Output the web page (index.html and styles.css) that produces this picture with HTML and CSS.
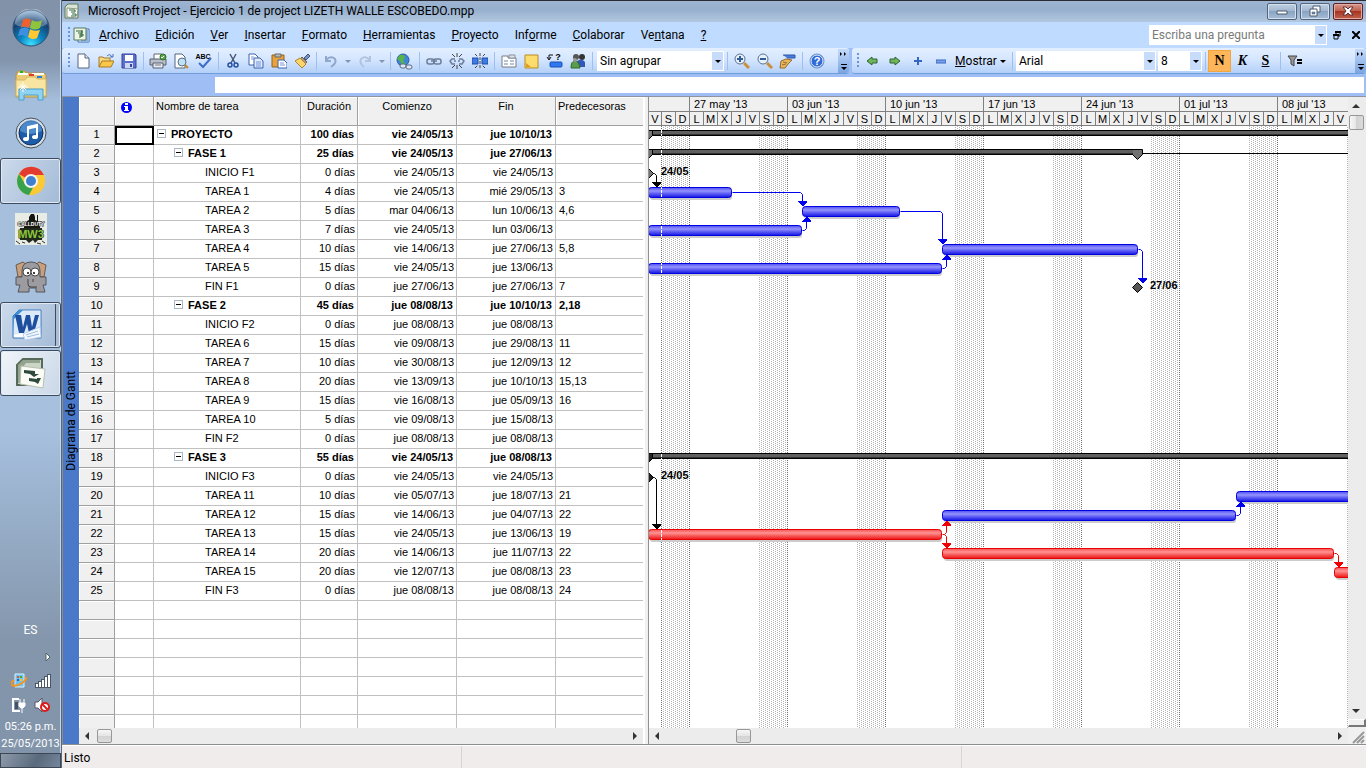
FILE: index.html
```html
<!DOCTYPE html>
<html lang="es">
<head>
<meta charset="utf-8">
<title>Microsoft Project - Ejercicio 1 de project LIZETH WALLE ESCOBEDO.mpp</title>
<link rel="stylesheet" href="styles.css">
</head>
<body>
<div class="screen">
<nav class="taskbar" aria-label="Barra de tareas">
  <button class="start" aria-label="Inicio"><svg width="38" height="38" viewBox="0 0 38 38">
    <defs>
      <radialGradient id="orb" cx=".5" cy=".95" r=".9"><stop offset="0" stop-color="#3fe0ff"/><stop offset=".35" stop-color="#0b86c4"/><stop offset=".75" stop-color="#15406f"/><stop offset="1" stop-color="#7fa6cc"/></radialGradient>
    </defs>
    <circle cx="19" cy="19" r="18" fill="url(#orb)" stroke="#31506e"/>
    <path d="M3 15a16 16 0 0 1 32 0c-6 5-26 5-32 0z" fill="#fff" opacity=".28"/>
    <path d="M11 11c3-2 5-2 8 0l-2 8c-3-2-6-2-8 0z" fill="#f0602a"/>
    <path d="M20 11c3 2 6 2 10 0l-2 8c-4 2-7 2-10 0z" fill="#8fc43c"/>
    <path d="M8 20c3-2 6-2 9 0l-2 8c-3-2-6-2-9-1z" fill="#3f8fe0"/>
    <path d="M18 20c3 2 6 2 10 1l-3 8c-3 2-6 1-9-1z" fill="#fdc832"/>
  </svg></button>
  <button class="task" aria-label="Explorador"><svg width="34" height="32" viewBox="0 0 34 32">
    <path d="M3 4l1-2h7l1 2h18l2 2v22H2V6z" fill="#e9cc75" stroke="#b59545"/>
    <path d="M4 5h10M18 5h12" stroke="#fff" stroke-width="2"/><path d="M6 3h3" stroke="#19b530" stroke-width="2"/><path d="M15 6h5" stroke="#e03b2e" stroke-width="2"/><path d="M23 8h5" stroke="#2b7fd8" stroke-width="2"/>
    <path d="M2 11h9l2-3h8l2 2h9v17H2z" fill="#f8e5a2" stroke="#d7b765"/>
    <path d="M5 20h24v11h-5v-5H10v5H5z" fill="#8fd3f2" stroke="#4c9dc9"/><path d="M9 13v10M4 18h10M6 15l6 6M12 15l-6 6" stroke="#fff"/>
  </svg></button>
  <button class="task" aria-label="iTunes"><svg width="32" height="32" viewBox="0 0 32 32">
    <circle cx="16" cy="16" r="15" fill="#d9dfe6" stroke="#44505f"/><circle cx="16" cy="16" r="12" fill="#1c5ca8" stroke="#0e2d57"/><path d="M5 14a11 11 0 0 1 22 0q-11 6-22 0z" fill="#69a9e2" opacity=".6"/>
    <path d="M13 22V10l9-2v12" fill="none" stroke="#fff" stroke-width="2"/><path d="M13 11l9-2" stroke="#fff" stroke-width="3"/><ellipse cx="11" cy="22" rx="3" ry="2" fill="#fff"/><ellipse cx="20" cy="20" rx="3" ry="2" fill="#fff"/>
  </svg></button>
  <button class="task task-open" aria-label="Chrome"><svg width="30" height="30" viewBox="0 0 30 30">
    <circle cx="15" cy="15" r="14" fill="#fcc934"/>
    <path d="M15 15L3 8A14 14 0 0 1 28 9H15z" fill="#e33b2e"/><path d="M15 15L9 18 3 8a14 14 0 0 0 10 21l6-11z" fill="#37a24c"/>
    <circle cx="15" cy="15" r="7" fill="#f4f4f4"/><circle cx="15" cy="15" r="5" fill="#3f7fd0"/>
  </svg></button>
  <button class="task" aria-label="Call of Duty MW3"><svg width="32" height="32" viewBox="0 0 32 32">
    <path d="M0 0h32v32H0z" fill="#e9ece4"/><path d="M9 14l3-6 2-1V4l2-3h3l1 3v3l2 1V2h1v6l2 6v3H9z" fill="#14170f"/><path d="M5 15h22v12h-4l-3 3-2-3-4 3-3-3H5z" fill="#23281d"/><path d="M1 28l4 3M27 28l3 2M7 29l3 1M22 30l4 1" stroke="#30352a"/>
    <text x="16" y="13" class="logo-small">CALLDUTY</text><text x="16" y="25" class="logo-big">MW3</text>
  </svg></button>
  <button class="task" aria-label="Elefante"><svg width="32" height="32" viewBox="0 0 32 32">
    <path d="M1 4l7-3 4 3v11l-9 1zM31 4l-7-3-4 3v11l9 1z" fill="#c9a07e" stroke="#6d5a4b"/>
    <path d="M7 10q0-9 9-9t9 9v6h6v8h-3l2 7h-9v-4h-7v4H3l2-7H1v-8h6z" fill="#9c9ca0" stroke="#55555a"/>
    <circle cx="12" cy="11" r="4" fill="#fff" stroke="#444"/><circle cx="20" cy="11" r="4" fill="#fff" stroke="#444"/><circle cx="13" cy="12" r="1"/><circle cx="19" cy="12" r="1"/>
    <path d="M13 18v5q0 3 3 3h6M18 18v3" fill="none" stroke="#444"/>
  </svg></button>
  <button class="task task-open task-stack" aria-label="Word"><svg width="32" height="32" viewBox="0 0 32 32">
    <path d="M8 1h22v28H2V7z" fill="#fff" stroke="#3a78bf"/><path d="M9 2h20v18L3 26V8z" fill="#dbe9f8"/><path d="M2 29V7l6-6h4L3 10z" fill="#3d8fd6"/>
    <path d="M4 6h6l2 12 3-12h4l2 12 3-12h4l-5 18h-5l-2-9-3 9H8z" fill="#1e4f9f"/>
    <path d="M12 25l17-7 1 10-16 3z" fill="#f4f9ff" stroke="#b9cfe8"/><path d="M15 26l12-4M16 28l12-3" stroke="#9cbbe0"/>
  </svg></button>
  <button class="task task-active" aria-label="Project"><svg width="34" height="34" viewBox="0 0 34 34">
    <path d="M9 3h19v26H3V9z" fill="#cdd5c6" stroke="#57695a" stroke-width="2"/><path d="M4 9l5-5h17v3H12L8 12v15H4z" fill="#93a48e"/>
    <path d="M7 10l24 3-2 19-23-4z" fill="#fafcf5" stroke="#b8c0b0"/>
    <path d="M10 14l11 1v3h4l-5 3-4-3-6-1zM15 22l8 1v-1h4l-3 6-3-2-6-1z" fill="#2d4a3a"/>
  </svg></button>
  <div class="tray">
    <div class="tray-lang">ES</div>
    <button class="tray-more" aria-label="Mostrar iconos ocultos"><svg width="6" height="10" viewBox="0 0 6 10"><path d="M1 1l4 4-4 4z" fill="#fff" stroke="#566"/></svg></button>
    <div class="tray-icons">
      <svg width="16" height="16" viewBox="0 0 16 16"><path d="M4 1h9v13H4z" fill="#6fc3ef" stroke="#d9f2ff"/><path d="M6 3h2v2H6z" fill="#e8502c"/><path d="M9 3h2v2H9z" fill="#54a52e"/><path d="M6 6h2v2H6z" fill="#2463c4"/><path d="M9 6h2v2H9z" fill="#f6c92a"/><path d="M14 4q3 2-3 6t-10 2q-2-2 2-5" fill="none" stroke="#f7941d" stroke-width="2"/></svg>
      <svg width="16" height="14" viewBox="0 0 16 14"><path d="M0 9h4v5H0zM3 7h4v7H3zM6 5h4v9H6zM9 2h4v12H9zM12 0h4v14h-4z" fill="#4a5768"/><path d="M1 10h2v3H1zM4 8h2v5H4zM7 6h2v7H7zM10 3h2v10h-2zM13 1h2v12h-2z" fill="#fff"/></svg>
      <svg width="16" height="16" viewBox="0 0 16 16"><path d="M8 2H2v12h7" fill="none" stroke="#fff" stroke-width="2"/><path d="M9 2v4M13 2v4M8 6h6v3l-2 2h-2L8 9zM11 11v5" fill="#fff" stroke="#fff"/><path d="M4 5h3v7H4z" fill="#445364"/></svg>
      <svg width="17" height="16" viewBox="0 0 17 16"><path d="M1 5h3l4-4v14l-4-4H1z" fill="#fff" stroke="#556"/><circle cx="11" cy="10" r="4" fill="#fff" stroke="#d81b1b" stroke-width="2"/><path d="M8 7l6 6" stroke="#d81b1b" stroke-width="2"/></svg>
    </div>
    <div class="clock">05:26 p.m.</div>
    <div class="clock">25/05/2013</div>
  </div>
  <button class="show-desktop" aria-label="Mostrar escritorio"></button>
</nav>

<main class="window">
  <header class="titlebar">
    <svg width="16" height="16" viewBox="0 0 16 16"><path d="M4 1h10v14H1V4z" fill="#dbe5d4" stroke="#5f7a62"/><path d="M3 5l11 1-1 9-10-1z" fill="#fff" stroke="#8b9a85"/><path d="M5 7h6v2H7M8 11h4v2H7" fill="none" stroke="#2f6b3d"/></svg>
    <h1>Microsoft Project - Ejercicio 1 de project LIZETH WALLE ESCOBEDO.mpp</h1>
    <div class="window-controls">
      <button aria-label="Minimizar"><svg width="12" height="12" viewBox="0 0 12 12"><path d="M1 6h10v3H1z" fill="#fff" stroke="#4b5b70"/></svg></button>
      <button aria-label="Restaurar"><svg width="12" height="12" viewBox="0 0 12 12"><path d="M4 1h7v6H4z" fill="#fff" stroke="#4b5b70"/><path d="M1 4h7v7H1z" fill="#fff" stroke="#4b5b70"/><path d="M3 7h3v2H3z" fill="#6f8fb3" stroke="#4b5b70" stroke-width=".5"/></svg></button>
      <button class="close" aria-label="Cerrar"><svg width="12" height="12" viewBox="0 0 12 12"><path d="M1 2h3l2 2 2-2h3L8 6l3 4H8L6 8l-2 2H1l3-4z" fill="#fff" stroke="#5b3237"/></svg></button>
    </div>
  </header>

  <div class="menubar">
    <span class="grip"></span>
    <svg class="menu-icon" width="18" height="17" viewBox="0 0 18 17"><path d="M5 2h11v13H5z" fill="#fff" stroke="#3f6fb5"/><path d="M14 3v11M8 14h8" stroke="#8fb2e0" stroke-width="2"/><path d="M1 1h12v12H1z" fill="#eef3e6" stroke="#557a5b"/><path d="M3 4h6v2H5M6 8h5M8 6v4h-2M9 3v7" fill="none" stroke="#2f6b3d"/></svg>
    <button><u>A</u>rchivo</button><button><u>E</u>dición</button><button><u>V</u>er</button><button><u>I</u>nsertar</button><button><u>F</u>ormato</button><button><u>H</u>erramientas</button><button><u>P</u>royecto</button><button>Inf<u>o</u>rme</button><button><u>C</u>olaborar</button><button>Ve<u>n</u>tana</button><button><u>?</u></button>
    <div class="menubar-end">
      <label class="combo combo-ask"><input type="text" placeholder="Escriba una pregunta" aria-label="Escriba una pregunta"><span class="drop"></span></label>
      <button class="doc-button" aria-label="Restaurar ventana"><svg width="8" height="9" viewBox="0 0 8 9"><path d="M3 3V1h4v4H5M1 4h4v4H1z" fill="none" stroke="#000"/><path d="M2 0h6v2H2zM0 3h6v2H0z"/></svg></button>
      <button class="doc-button" aria-label="Cerrar documento"><svg width="8" height="8" viewBox="0 0 8 8"><path d="M0 0l8 8M8 0L0 8" stroke="#000" stroke-width="2"/></svg></button>
    </div>
  </div>

  <div class="toolbars">
    <div class="toolbar">
      <span class="grip"></span>
      <button aria-label="Nuevo"><svg width="16" height="16" viewBox="0 0 16 16"><path d="M3 1h7l4 4v10H3z" fill="#fff" stroke="#56657f"/><path d="M10 1v4h4" fill="#dbe6f5" stroke="#56657f"/></svg></button>
      <button aria-label="Abrir"><svg width="16" height="16" viewBox="0 0 16 16"><path d="M1 14V4h4l1 1h6v3" fill="#f6d983" stroke="#a87b22"/><path d="M1 14l3-6h12l-3 6z" fill="#fcc64b" stroke="#a87b22"/><path d="M9 3q3-3 5 1M12 4h3V1" fill="none" stroke="#4573b5"/></svg></button>
      <button aria-label="Guardar"><svg width="16" height="16" viewBox="0 0 16 16"><path d="M1 1h13l1 1v13H1z" fill="#5c6fce" stroke="#34459c"/><path d="M4 2h8v6H4z" fill="#fff"/><path d="M4 10h8v5H4z" fill="#cfd6ef"/><path d="M9 11h2v3H9z" fill="#34459c"/></svg></button>
      <i class="sep"></i>
      <button aria-label="Imprimir"><svg width="18" height="16" viewBox="0 0 18 16"><path d="M5 1h8v6H5z" fill="#fff" stroke="#666"/><path d="M1 6h16v6H1z" fill="#b9bec8" stroke="#555f70"/><path d="M4 10h10v5H4z" fill="#e9edf4" stroke="#555f70"/><path d="M6 12h6" stroke="#777"/><circle cx="14" cy="4" r="3" fill="#58a84a" stroke="#2e6e2a"/><path d="M12 4l1 1 2-2" stroke="#fff" fill="none"/></svg></button>
      <button aria-label="Vista preliminar"><svg width="16" height="16" viewBox="0 0 16 16"><path d="M2 1h7l3 3v11H2z" fill="#fff" stroke="#56657f"/><circle cx="9" cy="9" r="4" fill="#bfe0f5" stroke="#57708c"/><path d="M12 12l3 3" stroke="#c8862c" stroke-width="2"/></svg></button>
      <button aria-label="Ortografía"><svg width="18" height="18" viewBox="0 0 18 18"><text x="8" y="7" class="abc">ABC</text><path d="M4 11l4 4 8-9" fill="none" stroke="#3b6fc9" stroke-width="2"/></svg></button>
      <i class="sep"></i>
      <button aria-label="Cortar"><svg width="16" height="16" viewBox="0 0 16 16"><path d="M5 1l5 9M11 1L6 10" stroke="#47597a" stroke-width="1.5"/><circle cx="5" cy="12" r="2" fill="none" stroke="#2450a4" stroke-width="1.5"/><circle cx="11" cy="12" r="2" fill="none" stroke="#2450a4" stroke-width="1.5"/></svg></button>
      <button aria-label="Copiar"><svg width="16" height="16" viewBox="0 0 16 16"><path d="M1 1h6l3 3v8H1z" fill="#fff" stroke="#3c62ad"/><path d="M6 5h6l3 3v7H6z" fill="#dfeaff" stroke="#3c62ad"/><path d="M3 4h3M3 6h3M8 9h5M8 11h5M8 13h5" stroke="#7596d8"/></svg></button>
      <button aria-label="Pegar"><svg width="16" height="16" viewBox="0 0 16 16"><path d="M1 2h12v12H1z" fill="#e9a33c" stroke="#94611c"/><path d="M4 1h6v3H4z" fill="#bbb" stroke="#666"/><path d="M7 7h6l3 3v5H7z" fill="#fff" stroke="#3c62ad"/><path d="M9 10h4M9 12h5" stroke="#7596d8"/></svg></button>
      <button aria-label="Copiar formato"><svg width="16" height="16" viewBox="0 0 16 16"><path d="M10 5l4-4 2 2-4 4z" fill="#7791c2" stroke="#41557d"/><path d="M8 4l5 5-2 2-5-5z" fill="#a89b88" stroke="#6e5f48"/><path d="M6 5l6 6-4 4L1 8z" fill="#fbd46c" stroke="#b0832c"/></svg></button>
      <i class="sep"></i>
      <button aria-label="Deshacer"><svg width="14" height="14" viewBox="0 0 14 14"><path d="M2 2v5h5M2 6q5-5 9-1 2 4-4 8" fill="none" stroke="#91a7cb" stroke-width="2"/></svg></button>
      <button class="mini" aria-label="Lista de deshacer"><span class="tri tri-dim"></span></button>
      <button aria-label="Rehacer"><svg width="14" height="14" viewBox="0 0 14 14"><path d="M12 2v5H7M12 6Q7 1 3 5q-2 4 3 8" fill="none" stroke="#b2c4de" stroke-width="2"/></svg></button>
      <button class="mini" aria-label="Lista de rehacer"><span class="tri tri-dim"></span></button>
      <i class="sep"></i>
      <button aria-label="Hipervínculo"><svg width="17" height="17" viewBox="0 0 17 17"><circle cx="7" cy="7" r="6" fill="#3f86d6" stroke="#2c5f9c"/><path d="M4 2q4-1 5 2L7 8l3 3-3 2-3-5-3-2z" fill="#59b447"/><g fill="#dfe8f5" stroke="#5c6c84"><rect x="4" y="11" width="6" height="4" rx="2"/><rect x="10" y="12" width="6" height="4" rx="2"/></g></svg></button>
      <i class="sep"></i>
      <button aria-label="Vincular tareas"><svg width="16" height="16" viewBox="0 0 16 16"><g fill="none" stroke="#6b7d99" stroke-width="1.5"><rect x="1" y="6" width="7" height="5" rx="2"/><rect x="8" y="6" width="7" height="5" rx="2"/><path d="M5 8h6"/></g></svg></button>
      <button aria-label="Desvincular tareas"><svg width="16" height="16" viewBox="0 0 16 16"><g fill="none" stroke="#6b7d99" stroke-width="1.5"><path d="M6 6H3L1 8l2 3h3M10 6h3l2 2-2 3h-3M5 8h2M9 8h2"/><path d="M8 0v4M3 1l3 3M13 1l-3 3M8 12v4M3 15l3-3M13 15l-3-3" stroke="#444" stroke-width="1"/></g></svg></button>
      <button aria-label="Dividir tarea"><svg width="16" height="16" viewBox="0 0 16 16"><path d="M0 5h6v6H0zM10 5h6v6h-6z" fill="#3f7be0" stroke="#1b4eae"/><path d="M8 0v16M3 1l3 3M13 1l-3 3M3 15l3-3M13 15l-3-3" stroke="#444" stroke-dasharray="3 1"/></svg></button>
      <i class="sep"></i>
      <button aria-label="Información de la tarea"><svg width="16" height="14" viewBox="0 0 16 14"><path d="M1 2h6v2h8v9H1z" fill="#fff" stroke="#767b85"/><path d="M8 1h6v3H8z" fill="#dfe4ee" stroke="#8a8f9c"/><path d="M3 7h4M9 7h4M3 10h4M9 10h4" stroke="#6f86ad"/></svg></button>
      <button aria-label="Notas"><svg width="15" height="15" viewBox="0 0 15 15"><path d="M1 1h13v13H1z" fill="#fbdc6c" stroke="#b98b20"/><path d="M2 9l5 4H2z" fill="#e49a22"/></svg></button>
      <button aria-label="Asignar recursos"><svg width="17" height="16" viewBox="0 0 17 16"><path d="M7 2H3v4M1 4l2 3 2-3" fill="none" stroke="#111"/><text x="12" y="7" class="qmark">?</text><rect x="4" y="9" width="12" height="5" rx="1" fill="#2f78ee" stroke="#1a4fb4"/></svg></button>
      <button aria-label="Recursos"><svg width="16" height="16" viewBox="0 0 16 16"><circle cx="6" cy="4" r="3" fill="#555"/><circle cx="12" cy="4" r="3" fill="#333"/><path d="M7 8q5-3 8 1v5H8z" fill="#3158b8"/><path d="M1 15q0-7 4-7t5 7z" fill="#5a9e4c" stroke="#2f6a2a"/><circle cx="5" cy="7" r="2" fill="#999"/></svg></button>
      <i class="sep"></i>
      <span class="combo combo-group"><select aria-label="Agrupar por"><option>Sin agrupar</option></select><span class="drop"></span></span>
      <i class="sep"></i>
      <button aria-label="Acercar"><svg width="16" height="16" viewBox="0 0 16 16"><circle cx="6" cy="6" r="5" fill="#e6f1fb" stroke="#5c7391"/><path d="M10 10l5 5" stroke="#c98f3d" stroke-width="3"/><path d="M3 6h6M6 3v6" stroke="#335b96" stroke-width="2"/></svg></button>
      <button aria-label="Alejar"><svg width="16" height="16" viewBox="0 0 16 16"><circle cx="6" cy="6" r="5" fill="#e6f1fb" stroke="#5c7391"/><path d="M10 10l5 5" stroke="#c98f3d" stroke-width="3"/><path d="M3 6h6" stroke="#335b96" stroke-width="2"/></svg></button>
      <button aria-label="Ir a la tarea"><svg width="17" height="16" viewBox="0 0 17 16"><path d="M4 2h12v3H8" fill="#4b7edb" stroke="#2c55a5"/><path d="M2 8l5-2 6 1-3 3-4 5H1z" fill="#e8b861" stroke="#97692a"/><path d="M4 9l4 1M3 12l4-1" stroke="#97692a"/></svg></button>
      <i class="sep"></i>
      <button aria-label="Ayuda"><svg width="16" height="16" viewBox="0 0 16 16"><circle cx="8" cy="8" r="7" fill="#2f6cd8" stroke="#6c8fc4"/><circle cx="8" cy="8" r="6" fill="none" stroke="#e8f0ff"/><text x="8" y="12" class="help">?</text></svg></button>
      <button class="overflow" aria-label="Opciones de barra de herramientas"><svg width="8" height="20" viewBox="0 0 8 20"><path d="M0 1l2 2-2 2zM4 1l2 2-2 2zM1 13h6v1H1zM1 16h6l-3 3z"/></svg></button>
    </div>
    <div class="toolbar toolbar-format">
      <span class="grip"></span>
      <button aria-label="Anular sangría"><svg width="12" height="10" viewBox="0 0 12 10"><path d="M1 5l5-4v2h5v4H6v2z" fill="#72b45b" stroke="#2c6431"/></svg></button>
      <button aria-label="Aplicar sangría"><svg width="12" height="10" viewBox="0 0 12 10"><path d="M11 5L6 1v2H1v4h5v2z" fill="#72b45b" stroke="#2c6431"/></svg></button>
      <button aria-label="Mostrar subtareas"><svg width="10" height="10" viewBox="0 0 10 10"><path d="M1 5h8M5 1v8" stroke="#3566c4" stroke-width="2"/></svg></button>
      <button aria-label="Ocultar subtareas"><svg width="10" height="10" viewBox="0 0 10 10"><path d="M0 4h10v3H0z" fill="#7ea2e6" stroke="#3566c4"/></svg></button>
      <button class="show-menu"><span><u>M</u>ostrar</span><span class="tri"></span></button>
      <i class="sep"></i>
      <span class="combo combo-font"><select aria-label="Fuente"><option>Arial</option></select><span class="drop"></span></span>
      <span class="combo combo-size"><select aria-label="Tamaño de fuente"><option>8</option></select><span class="drop"></span></span>
      <i class="sep"></i>
      <button class="letter letter-on" aria-pressed="true">N</button>
      <button class="letter"><em>K</em></button>
      <button class="letter"><u>S</u></button>
      <i class="sep"></i>
      <button aria-label="Autofiltro"><svg width="16" height="12" viewBox="0 0 16 12"><path d="M1 1h9L7 5v6L4 9V5z" fill="#999" stroke="#444"/><path d="M10 5h5M10 8h5" stroke="#000" stroke-width="2"/></svg></button>
      <button class="overflow" aria-label="Opciones de formato"><svg width="8" height="20" viewBox="0 0 8 20"><path d="M0 1l2 2-2 2zM4 1l2 2-2 2zM1 13h6v1H1zM1 16h6l-3 3z"/></svg></button>
    </div>
  </div>

  <div class="entry-bar"><input type="text" aria-label="Barra de entrada"></div>

  <div class="workspace">
    <div class="view-name"><span>Diagrama de Gantt</span></div>
    <section class="sheet-pane">
      <div class="sheet-clip">
      <table class="sheet">
        <colgroup><col class="c-num"><col class="c-info"><col class="c-name"><col class="c-dur"><col class="c-date"><col class="c-date"><col class="c-pred"></colgroup>
        <thead><tr><th></th><th class="info-head"><svg width="11" height="11" viewBox="0 0 11 11"><circle cx="5.5" cy="5.5" r="5.5" fill="#00f"/><path d="M4 4h3v4h1v1H3V8h1V5H3V4zM4 1h3v2H4z" fill="#fff"/></svg></th><th class="left">Nombre de tarea</th><th>Duración</th><th>Comienzo</th><th>Fin</th><th class="left">Predecesoras</th></tr></thead>
        <tbody>
        <tr class="sum"><th>1</th><td class="selected"></td><td class="l1"><button class="toggle" aria-label="Contraer"></button>PROYECTO</td><td>100 días</td><td>vie 24/05/13</td><td>jue 10/10/13</td><td></td></tr>
        <tr class="sum"><th>2</th><td></td><td class="l2"><button class="toggle" aria-label="Contraer"></button>FASE 1</td><td>25 días</td><td>vie 24/05/13</td><td>jue 27/06/13</td><td></td></tr>
        <tr><th>3</th><td></td><td>INICIO F1</td><td>0 días</td><td>vie 24/05/13</td><td>vie 24/05/13</td><td></td></tr>
        <tr><th>4</th><td></td><td>TAREA 1</td><td>4 días</td><td>vie 24/05/13</td><td>mié 29/05/13</td><td>3</td></tr>
        <tr><th>5</th><td></td><td>TAREA 2</td><td>5 días</td><td>mar 04/06/13</td><td>lun 10/06/13</td><td>4,6</td></tr>
        <tr><th>6</th><td></td><td>TAREA 3</td><td>7 días</td><td>vie 24/05/13</td><td>lun 03/06/13</td><td></td></tr>
        <tr><th>7</th><td></td><td>TAREA 4</td><td>10 días</td><td>vie 14/06/13</td><td>jue 27/06/13</td><td>5,8</td></tr>
        <tr><th>8</th><td></td><td>TAREA 5</td><td>15 días</td><td>vie 24/05/13</td><td>jue 13/06/13</td><td></td></tr>
        <tr><th>9</th><td></td><td>FIN F1</td><td>0 días</td><td>jue 27/06/13</td><td>jue 27/06/13</td><td>7</td></tr>
        <tr class="sum"><th>10</th><td></td><td class="l2"><button class="toggle" aria-label="Contraer"></button>FASE 2</td><td>45 días</td><td>jue 08/08/13</td><td>jue 10/10/13</td><td>2,18</td></tr>
        <tr><th>11</th><td></td><td>INICIO F2</td><td>0 días</td><td>jue 08/08/13</td><td>jue 08/08/13</td><td></td></tr>
        <tr><th>12</th><td></td><td>TAREA 6</td><td>15 días</td><td>vie 09/08/13</td><td>jue 29/08/13</td><td>11</td></tr>
        <tr><th>13</th><td></td><td>TAREA 7</td><td>10 días</td><td>vie 30/08/13</td><td>jue 12/09/13</td><td>12</td></tr>
        <tr><th>14</th><td></td><td>TAREA 8</td><td>20 días</td><td>vie 13/09/13</td><td>jue 10/10/13</td><td>15,13</td></tr>
        <tr><th>15</th><td></td><td>TAREA 9</td><td>15 días</td><td>vie 16/08/13</td><td>jue 05/09/13</td><td>16</td></tr>
        <tr><th>16</th><td></td><td>TAREA 10</td><td>5 días</td><td>vie 09/08/13</td><td>jue 15/08/13</td><td></td></tr>
        <tr><th>17</th><td></td><td>FIN F2</td><td>0 días</td><td>jue 08/08/13</td><td>jue 08/08/13</td><td></td></tr>
        <tr class="sum"><th>18</th><td></td><td class="l2"><button class="toggle" aria-label="Contraer"></button>FASE 3</td><td>55 días</td><td>vie 24/05/13</td><td>jue 08/08/13</td><td></td></tr>
        <tr><th>19</th><td></td><td>INICIO F3</td><td>0 días</td><td>vie 24/05/13</td><td>vie 24/05/13</td><td></td></tr>
        <tr><th>20</th><td></td><td>TAREA 11</td><td>10 días</td><td>vie 05/07/13</td><td>jue 18/07/13</td><td>21</td></tr>
        <tr><th>21</th><td></td><td>TAREA 12</td><td>15 días</td><td>vie 14/06/13</td><td>jue 04/07/13</td><td>22</td></tr>
        <tr><th>22</th><td></td><td>TAREA 13</td><td>15 días</td><td>vie 24/05/13</td><td>jue 13/06/13</td><td>19</td></tr>
        <tr><th>23</th><td></td><td>TAREA 14</td><td>20 días</td><td>vie 14/06/13</td><td>jue 11/07/13</td><td>22</td></tr>
        <tr><th>24</th><td></td><td>TAREA 15</td><td>20 días</td><td>vie 12/07/13</td><td>jue 08/08/13</td><td>23</td></tr>
        <tr><th>25</th><td></td><td>FIN F3</td><td>0 días</td><td>jue 08/08/13</td><td>jue 08/08/13</td><td>24</td></tr>
        <tr><th></th><td></td><td></td><td></td><td></td><td></td><td></td></tr>
        <tr><th></th><td></td><td></td><td></td><td></td><td></td><td></td></tr>
        <tr><th></th><td></td><td></td><td></td><td></td><td></td><td></td></tr>
        <tr><th></th><td></td><td></td><td></td><td></td><td></td><td></td></tr>
        <tr><th></th><td></td><td></td><td></td><td></td><td></td><td></td></tr>
        <tr><th></th><td></td><td></td><td></td><td></td><td></td><td></td></tr>
        <tr><th></th><td></td><td></td><td></td><td></td><td></td><td></td></tr>
        </tbody>
      </table>
      </div>
      <div class="scroll-h"><span class="arrow-left"></span><span class="thumb thumb-first"></span><span class="arrow-right"></span></div>
    </section>
    <div class="splitter"></div>
    <section class="gantt-pane">
      <div class="calendar">
        <div class="week week-part"><div class="week-name"></div><ol><li>V</li><li>S</li><li>D</li></ol></div>
        <div class="week"><div class="week-name">27 may '13</div><ol><li>L</li><li>M</li><li>X</li><li>J</li><li>V</li><li>S</li><li>D</li></ol></div>
        <div class="week"><div class="week-name">03 jun '13</div><ol><li>L</li><li>M</li><li>X</li><li>J</li><li>V</li><li>S</li><li>D</li></ol></div>
        <div class="week"><div class="week-name">10 jun '13</div><ol><li>L</li><li>M</li><li>X</li><li>J</li><li>V</li><li>S</li><li>D</li></ol></div>
        <div class="week"><div class="week-name">17 jun '13</div><ol><li>L</li><li>M</li><li>X</li><li>J</li><li>V</li><li>S</li><li>D</li></ol></div>
        <div class="week"><div class="week-name">24 jun '13</div><ol><li>L</li><li>M</li><li>X</li><li>J</li><li>V</li><li>S</li><li>D</li></ol></div>
        <div class="week"><div class="week-name">01 jul '13</div><ol><li>L</li><li>M</li><li>X</li><li>J</li><li>V</li><li>S</li><li>D</li></ol></div>
        <div class="week week-last"><div class="week-name">08 jul '13</div><ol><li>L</li><li>M</li><li>X</li><li>J</li><li>V</li></ol></div>
      </div>
      <svg class="chart" role="img" aria-label="Diagrama de Gantt">
        <defs>
          <linearGradient id="blue" x1="0" y1="0" x2="0" y2="1"><stop offset="0" stop-color="#4c4cf0"/><stop offset=".35" stop-color="#9494ff"/><stop offset=".6" stop-color="#6060f4"/><stop offset="1" stop-color="#1414e6"/></linearGradient>
          <linearGradient id="red" x1="0" y1="0" x2="0" y2="1"><stop offset="0" stop-color="#f65050"/><stop offset=".35" stop-color="#ff9494"/><stop offset=".6" stop-color="#f86060"/><stop offset="1" stop-color="#ea1414"/></linearGradient>
          <linearGradient id="dark" x1="0" y1="0" x2="0" y2="1"><stop offset="0" stop-color="#777"/><stop offset="1" stop-color="#222"/></linearGradient>
          <pattern id="dots" width="4" height="2" patternUnits="userSpaceOnUse"><path d="M0 0h1v1H0zM2 1h1v1H2z" fill="#b4b4b4"/></pattern>
          <pattern id="dash" width="1" height="2" patternUnits="userSpaceOnUse"><path d="M0 0h1v1H0z" fill="#707070"/></pattern>
          <pattern id="dash-light" width="1" height="4" patternUnits="userSpaceOnUse"><path d="M0 0h1v3H0z" fill="#fff"/></pattern>
        </defs>
        <g shape-rendering="crispEdges">
          <path d="M12 0h28v602H12zM110 0h28v602h-28zM208 0h28v602h-28zM306 0h28v602h-28zM404 0h28v602h-28zM502 0h28v602h-28zM600 0h28v602h-28zM698 0h28v602h-28z" fill="url(#dots)"/>
          <path d="M12 0h1v602h-1zM40 0h1v602h-1zM138 0h1v602h-1zM236 0h1v602h-1zM334 0h1v602h-1zM432 0h1v602h-1zM530 0h1v602h-1zM628 0h1v602h-1z" fill="url(#dash)"/>
        </g>
        <g fill="#ccc">
          <rect x="1" y="64" width="82" height="10" rx="3"/><rect x="155" y="83" width="96" height="10" rx="3"/><rect x="1" y="102" width="152" height="10" rx="3"/><rect x="295" y="121" width="194" height="10" rx="3"/><rect x="1" y="140" width="292" height="10" rx="3"/>
          <rect x="589" y="368" width="300" height="10" rx="3"/><rect x="295" y="387" width="292" height="10" rx="3"/><rect x="1" y="406" width="292" height="10" rx="3"/><rect x="295" y="425" width="390" height="10" rx="3"/><rect x="687" y="444" width="300" height="10" rx="3"/>
        </g>
        <g transform="translate(.5 .5)">
          <g fill="url(#blue)" stroke="#0000e0">
            <rect x="-1" y="61" width="83" height="10" rx="3"/><rect x="153" y="80" width="97" height="10" rx="3"/><rect x="-1" y="99" width="153" height="10" rx="3"/><rect x="293" y="118" width="195" height="10" rx="3"/><rect x="-1" y="137" width="293" height="10" rx="3"/><rect x="587" y="365" width="300" height="10" rx="3"/><rect x="293" y="384" width="293" height="10" rx="3"/>
          </g>
          <g fill="url(#red)" stroke="#e80000">
            <rect x="-1" y="403" width="293" height="10" rx="3"/><rect x="293" y="422" width="391" height="10" rx="3"/><rect x="685" y="441" width="300" height="10" rx="3"/>
          </g>
          <path d="M83 66h68l2 2v9M251 85h40l2 2v28M153 104h2l2-2v-8M293 142h2l2-2v-8M489 123h2l2 2v29M587 389h2l2-2v-8" fill="none" stroke="#0000f0"/>
          <path d="M293 408h2l2-2v-8M295 408l2 2v8M685 427h2l2 2v9" fill="none" stroke="#f00000"/>
          <path d="M1 47h4l2 2v8M1 351h4l2 2v46M493 27h1000" fill="none" stroke="#000"/>
          <g fill="url(#dark)" stroke="#000">
            <path d="M-6 47l5-5 5 5-5 5zM-6 351l5-5 5 5-5 5zM483 161l5-5 5 5-5 5z"/>
            <path d="M483 23h10v5l-5 5-5-5zM-6 4h9v5l-5 5zM-6 23h9v5l-5 5zM-6 327h9v5l-5 5z"/>
          </g>
        </g>
        <g shape-rendering="crispEdges">
          <path d="M149 75h9v1l-4 4h-1l-4-4zM289 113h9v1l-4 4h-1l-4-4zM489 152h9v1l-4 4h-1l-4-4zM153 96h9v-1l-4-4h-1l-4 4zM293 134h9v-1l-4-4h-1l-4 4zM587 381h9v-1l-4-4h-1l-4 4z" fill="#0000f0"/>
          <path d="M293 400h9v-1l-4-4h-1l-4 4zM293 417h9v1l-4 4h-1l-4-4zM685 436h9v1l-4 4h-1l-4-4z" fill="#f00000"/>
          <path d="M3 56h9v1l-4 4H7l-4-4zM3 398h9v1l-4 4H7l-4-4z" fill="#000"/>
          <path d="M3 4h1500v6H3zM3 23h481v6H3zM3 327h1500v6H3z" fill="#000"/><path d="M4 5h1500v3H4zM4 24h480v3H4zM4 328h1500v3H4z" fill="#606060"/><path d="M4 8h1500v1H4zM4 27h480v1H4zM4 331h1500v1H4z" fill="#333"/>
          <path d="M12 4h1v6h-1zM12 23h1v6h-1zM12 61h1v11h-1zM12 99h1v11h-1zM12 137h1v11h-1zM12 327h1v6h-1zM12 403h1v11h-1z" fill="url(#dash-light)"/>
        </g>
        <g class="bar-label"><text x="12" y="49">24/05</text><text x="12" y="353">24/05</text><text x="501" y="163">27/06</text></g>
      </svg>
      <div class="scroll-h"><span class="arrow-left"></span><span class="thumb thumb-chart"></span><span class="arrow-right"></span></div>
    </section>
    <div class="side">
      <div class="scroll-v"><span class="arrow-up"></span><span class="thumb-v"></span><span class="arrow-down"></span></div>
      <div class="split-handle"></div>
      <svg class="resize" width="16" height="16" viewBox="0 0 16 16"><path d="M4 15L15 4M8 15l7-7M12 15l3-3" stroke="#999" stroke-width="2"/></svg>
    </div>
  </div>
  <footer class="status"><span class="status-ready">Listo</span><span class="status-mid"></span><span class="status-end"></span></footer>
</main>
</div>
</body>
</html>
```
FILE: styles.css
```css
* { box-sizing: border-box; }
body { margin: 0; font: 12px/16px Roboto, "Open Sans", sans-serif; color: #000; }
button { border: 0; padding: 0; background: none; font: inherit; color: inherit; display: flex; align-items: center; justify-content: center; }
.screen { display: flex; height: 100vh; overflow: hidden; }
svg { flex: none; display: block; }

/* Windows taskbar */
.taskbar { flex: 0 0 62px; min-width: 0; display: flex; flex-direction: column; background: linear-gradient(#8192a9 0, #8395ad 60px, #a5bedc 100px, #a6c0de 430px, #8496ac 640px, #8294aa); border-right: 1px solid #56697f; box-shadow: inset -1px 0 #c5d6ea; }
.start { height: 61px; padding-bottom: 5px; }
.task { height: 48px; padding-bottom: 1px; }
.task-open, .task-active { height: 46px; margin: 1px 0; padding: 0; border: 1px solid #3c4b5e; border-radius: 3px; box-shadow: inset 0 0 0 1px #dfe9f5; background: linear-gradient(120deg, #ccdaeb, #a3bad6); }
.task-active { background: linear-gradient(120deg, #f1f5f9, #c9d7e8); }
.task-stack { padding-right: 8px; box-shadow: inset 0 0 0 1px #dfe9f5, inset -4px 0 #a8bdd8, inset -5px 0 #3c4b5e; }
.logo-small { font: bold 5px "Liberation Sans", sans-serif; text-anchor: middle; fill: #fff; stroke: #222; stroke-width: 1px; paint-order: stroke; }
.logo-big { font: bold 11px "Liberation Sans", sans-serif; text-anchor: middle; fill: #8dc63f; stroke: #1c2a12; stroke-width: 1px; paint-order: stroke; }
.tray { margin-top: auto; color: #fff; display: flex; flex-direction: column; align-items: center; white-space: nowrap; }
.tray-lang { height: 27px; }
.tray-more { align-self: flex-end; margin-right: 10px; height: 16px; }
.tray-icons { display: grid; grid-template-columns: 24px 24px; grid-auto-rows: 24px; place-items: center; padding: 4px 0 2px; }
.clock { height: 17px; font-size: 11px; }
.show-desktop { height: 15px; border: 1px solid #3d4754; background: linear-gradient(120deg, #8d9aaa, #5a6a7d 60%, #76869a); }

/* Window frame */
.window { flex: 1; min-width: 0; display: flex; flex-direction: column; background: #9ebef5; }
.titlebar { flex: 0 0 22px; display: flex; align-items: center; gap: 8px; padding: 0 3px 1px 2px; border-top: 1px solid #2b2b33; background: linear-gradient(#9db5d1, #96afcd 40%, #b2c8e0); }
.titlebar h1 { margin: 0; font-size: 12px; font-weight: normal; white-space: nowrap; }
.window-controls { margin-left: auto; display: flex; gap: 3px; }
.window-controls button { width: 30px; height: 17px; border: 1px solid #52647b; border-radius: 2px; box-shadow: inset 0 0 0 1px #d3e0ee; background: linear-gradient(#c0d0e3, #9fb4ce 50%, #89a3c2 50%, #a7bdd6); }
.window-controls .close { border-color: #5c2229; box-shadow: inset 0 0 0 1px #e2aaa1; background: linear-gradient(#d69a8d, #bd5a48 50%, #a53422 50%, #c2644e); }

.menubar { flex: 0 0 26px; display: flex; align-items: center; padding-left: 5px; background: #bfdbff; white-space: nowrap; }
.menubar > button { padding: 0 8px; }
.menu-icon { margin: 0 0 0 2px; }
.menubar-end { margin-left: auto; display: flex; align-items: center; gap: 1px; padding-right: 1px; }
.doc-button { width: 18px; height: 16px; }
.grip { flex: 0 0 4px; height: 16px; background: repeating-linear-gradient(#6d94d4 0 2px, transparent 2px 4px) 1px 0 / 2px 100% no-repeat; }

.toolbars { flex: 0 0 26px; display: flex; background: #9ebef5; }
.toolbar { display: flex; align-items: center; height: 26px; padding: 1px 0 0 5px; background: linear-gradient(#e3efff, #d5e6ff 45%, #b3d0f8); border-bottom: 1px solid #6f9dd9; border-radius: 3px; }
.toolbar > button { flex: 0 0 23px; height: 22px; }
.toolbar > .mini { flex-basis: 11px; }
.toolbar-format { flex: 1; min-width: 0; margin-left: 3px; padding-left: 4px; }
.sep { flex: 0 0 6px; height: 18px; background: linear-gradient(#9ec0f0, #9ec0f0) 3px 0 / 1px 100% no-repeat; }
.toolbar > .overflow { flex-basis: 11px; margin-left: 10px; height: 24px; background: linear-gradient(#c4dafa, #7ba5e2); border-radius: 0 3px 3px 0; }
.toolbar-format > .overflow { margin-left: auto; }
.toolbar > .show-menu { flex-basis: 57px; gap: 3px; }
.tri { border: 3px solid transparent; border-top-color: #000; border-bottom: 0; }
.tri-dim { border-top-color: #8395b5; }
.toolbar > .letter { font: bold 14px/20px "Liberation Serif", serif; }
.toolbar > .letter-on { border: 1px solid #f0a63c; background: #ffb55a; }
.combo { display: flex; height: 20px; background: #fff; border: 1px solid #fff; }
.combo select, .combo input { flex: 1; min-width: 0; appearance: none; border: 0; outline: 0; padding: 0 0 0 2px; background: none; font: inherit; color: inherit; }
.combo input::placeholder { color: #7a7a7a; opacity: 1; }
.drop { flex: 0 0 11px; background: #c6dcfa; display: grid; place-items: center; }
.drop::before { content: ""; border: 3px solid transparent; border-top-color: #000; border-bottom: 0; }
.combo-ask { width: 178px; }
.combo-group { width: 127px; margin-left: 2px; }
.combo-font { width: 140px; margin: 0 2px 0 1px; }
.combo-size { width: 44px; }
.abc { font: bold 7px "Liberation Sans", sans-serif; text-anchor: middle; }
.qmark { font: bold 9px "Liberation Sans", sans-serif; text-anchor: middle; }
.help { font: bold 11px "Liberation Sans", sans-serif; text-anchor: middle; fill: #fff; }

.entry-bar { flex: 0 0 22px; padding: 3px 2px 3px 153px; display: flex; }
.entry-bar input { flex: 1; min-width: 0; height: 16px; padding: 0 2px; border: 0; background: #fff; font: inherit; }

/* Sheet and chart */
.workspace { flex: 1; min-height: 0; display: flex; box-shadow: inset 0 1px #8f959e; padding-top: 1px; background: #fff; font: 11px/16px "Liberation Sans", Arial, sans-serif; }
.view-name { flex: 0 0 17px; border-left: 1px solid #8a8a8a; background: #4a79ca; display: flex; justify-content: center; align-items: center; }
.view-name span { writing-mode: vertical-rl; transform: rotate(180deg); font: 12px/16px Roboto, sans-serif; white-space: nowrap; }
.sheet-pane { flex: 0 0 564px; display: flex; flex-direction: column; }
.sheet-clip { flex: 1; min-height: 0; overflow: hidden; }
.sheet { width: 100%; table-layout: fixed; border-collapse: separate; border-spacing: 0; }
.c-num { width: 36px; } .c-info { width: 39px; } .c-name { width: 147px; } .c-dur { width: 57px; } .c-date { width: 99px; } .c-pred { width: 87px; }
.sheet th, .sheet td { height: 19px; padding: 0 2px; border: 0 solid #c0c0c0; border-width: 0 1px 1px 0; text-align: right; vertical-align: top; white-space: nowrap; line-height: 17px; font-weight: normal; }
.sheet th { background: #f0f0f0; border-color: #a0a0a0; text-align: center; box-shadow: inset 1px 1px #fff; }
.sheet thead th { height: 29px; padding-top: 1px; }
.sheet thead .left { text-align: left; }
.info-head svg { margin: 4px 0 0 4px; }
.sheet td:nth-child(3) { text-align: left; padding-left: 51px; }
.sheet td:nth-child(7) { text-align: left; padding-left: 3px; }
.sheet tr > :last-child { border-right: 0; }
.sheet .sum td { font-weight: bold; padding-right: 3px; }
.sheet .sum td.l1 { padding-left: 3px; }
.sheet .sum td.l2 { padding-left: 20px; }
.sheet td.selected { border: 2px solid #000; }
.toggle { display: inline-block; vertical-align: top; width: 9px; height: 9px; margin: 3px 5px 0 0; border: 1px solid #a9b8c4; background: linear-gradient(#000, #000) center / 5px 1px no-repeat; }
.splitter { flex: 0 0 6px; background: #f0f0f0; border-left: 2px solid #fff; border-right: 1px solid #909090; }
.gantt-pane { flex: 1; min-width: 0; display: flex; flex-direction: column; }
.calendar { flex: 0 0 29px; display: flex; overflow: hidden; background: #f0f0f0; }
.week { flex: 0 0 98px; border-right: 1px solid #808080; }
.week-part { flex-basis: 41px; }
.week-last { flex: 1 0 70px; border-right: 0; }
.week-name { height: 15px; line-height: 15px; padding-left: 4px; border-bottom: 1px solid #808080; }
.week ol { list-style: none; margin: 0; padding: 0; display: flex; height: 14px; }
.week li { flex: 0 0 14px; text-align: center; line-height: 14px; border-right: 1px solid #808080; border-bottom: 1px solid #808080; }
.week-part li:first-child { flex-basis: 13px; }
.week li:last-child { flex-basis: 13px; border-right: 0; }
.chart { flex: 1; min-height: 0; width: 100%; overflow: hidden; }
.bar-label { font: bold 11px "Liberation Sans", sans-serif; }

/* Scroll bars */
.scroll-h { flex: 0 0 16px; display: flex; align-items: center; padding: 0 6px; background: #ececec; }
.arrow-left { border: 4px solid transparent; border-right-color: #333; border-left: 0; }
.arrow-right { border: 4px solid transparent; border-left-color: #333; border-right: 0; margin-left: auto; }
.thumb { width: 15px; height: 14px; border: 1px solid #979797; border-radius: 2px; background: linear-gradient(#f6f6f6, #e4e4e4 50%, #d2d2d2 50%, #dcdcdc); }
.thumb-first { margin-left: 8px; }
.thumb-chart { margin-left: 77px; }
.side { flex: 0 0 18px; display: flex; flex-direction: column; background: #f0f0f0; }
.scroll-v { flex: 1; display: flex; flex-direction: column; align-items: center; padding: 7px 2px 6px 0; background: #ececec; }
.arrow-up { border: 4px solid transparent; border-bottom-color: #333; border-top: 0; }
.arrow-down { border: 4px solid transparent; border-top-color: #333; border-bottom: 0; margin-top: auto; }
.thumb-v { width: 15px; height: 15px; margin-top: 7px; border: 1px solid #979797; border-radius: 2px; background: linear-gradient(90deg, #f6f6f6, #e4e4e4 50%, #d2d2d2 50%, #dcdcdc); }
.split-handle { height: 8px; border: 1px solid #fff; border-right: 2px solid #777; border-bottom: 2px solid #777; background: #f0f0f0; }
.resize { margin: 1px 0 0 1px; }

.status { flex: 0 0 24px; display: flex; align-items: center; border-top: 1px solid #8c8c8c; background: #f0eceb; box-shadow: inset 0 1px #fff; line-height: 24px; }
.status span { height: 22px; border-right: 1px solid #d8d4d3; }
.status-ready { flex: 0 0 400px; padding-left: 2px; }
.status-mid { flex: 0 0 500px; }
.status .status-end { flex: 1; border: 0; }
```
